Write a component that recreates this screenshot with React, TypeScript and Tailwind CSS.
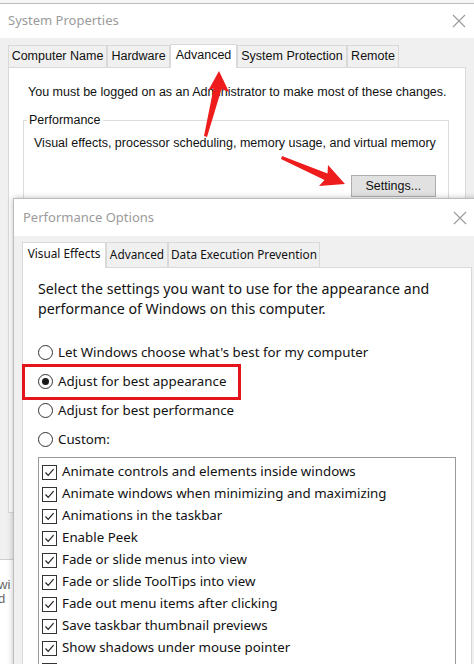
import React from 'react';

const sysTabs = [
  { label: 'Computer Name', w: 'w-[99px]' },
  { label: 'Hardware', w: 'w-[63px]' },
  { label: 'Advanced', w: 'w-[67px]', active: true },
  { label: 'System Protection', w: 'w-[110px]' },
  { label: 'Remote', w: 'w-[52px]' },
];

const perfTabs = [
  { label: 'Visual Effects', w: 'w-[84px]', active: true },
  { label: 'Advanced', w: 'w-[62px]' },
  { label: 'Data Execution Prevention', w: 'w-[152px]' },
];

const radios = [
  { label: "Let Windows choose what's best for my computer" },
  { label: 'Adjust for best appearance', checked: true },
  { label: 'Adjust for best performance' },
  { label: 'Custom:' },
];

const effects = [
  'Animate controls and elements inside windows',
  'Animate windows when minimizing and maximizing',
  'Animations in the taskbar',
  'Enable Peek',
  'Fade or slide menus into view',
  'Fade or slide ToolTips into view',
  'Fade out menu items after clicking',
  'Save taskbar thumbnail previews',
  'Show shadows under mouse pointer',
  'Show shadows under windows',
];

function CloseX() {
  return (
    <svg width="14" height="14" viewBox="0 0 14 14" className="text-[#9a9a9a]">
      <path d="M1 1 L13 13 M13 1 L1 13" stroke="currentColor" strokeWidth="1.1" fill="none" />
    </svg>
  );
}

function Tab({ label, w, active, tall }: { label: string; w: string; active?: boolean; tall: string }) {
  return (
    <div
      className={`${w} flex items-center justify-center whitespace-nowrap border border-[#d9d9d9] border-b-0 ${
        active ? `${tall} bg-white -mb-px z-10 pb-[3px]` : 'h-full bg-[#f0f0f0]'
      }`}
    >
      {label}
    </div>
  );
}

function Radio({ checked }: { checked?: boolean }) {
  return (
    <div className="w-[15px] h-[15px] rounded-full border border-[#333] bg-white flex items-center justify-center shrink-0">
      {checked && <div className="w-[7px] h-[7px] rounded-full bg-[#1a1a1a]" />}
    </div>
  );
}

function Checkbox() {
  return (
    <div className="w-[15px] h-[15px] border border-[#333] bg-white flex items-center justify-center shrink-0">
      <svg width="11" height="11" viewBox="0 0 11 11">
        <path d="M1.5 5.5 L4.2 8.3 L9.6 2.2" stroke="#222" strokeWidth="1.2" fill="none" />
      </svg>
    </div>
  );
}

function SystemProperties() {
  return (
    <div className="absolute left-0 top-[4px] w-[474px] h-[660px] flex flex-col font-['Liberation_Sans',Arial,sans-serif] text-[12.5px] text-[#111]">
      {/* Title bar */}
      <div className="h-[34px] bg-white flex items-center justify-between pl-[8px] pr-[8px] shrink-0">
        <span className="font-['Noto_Sans',sans-serif] text-[13px] text-[#9b9b9b]">System Properties</span>
        <CloseX />
      </div>
      {/* Body */}
      <div className="flex-1 bg-[#f0f0f0] pl-[8px] pt-[7px] flex flex-col">
        <div className="h-[22px] flex items-end">
          {sysTabs.map((t) => (
            <Tab key={t.label} label={t.label} w={t.w} active={t.active} tall="h-[24px]" />
          ))}
        </div>
        <div className="h-[446px] w-[458px] bg-white border border-[#d9d9d9] pl-[19px] pt-[16px] flex flex-col">
          <p className="leading-[16px] whitespace-nowrap">You must be logged on as an Administrator to make most of these changes.</p>
          <fieldset className="mt-[12px] ml-[-5px] w-[425px] border border-[#dcdcdc] pl-[10px] pr-[12px] pb-[10px]">
            <legend className="ml-[-7px] px-[2px] leading-[16px]">Performance</legend>
            <p className="mt-[7px] leading-[16px] whitespace-nowrap">Visual effects, processor scheduling, memory usage, and virtual memory</p>
            <div className="flex justify-end mt-[24px]">
              <button className="w-[85px] h-[22px] border border-[#adadad] bg-[#e1e1e1] text-[12.5px]">Settings...</button>
            </div>
          </fieldset>
        </div>
        <div className="mt-[46px] -ml-[8px] w-[20px] border-t border-[#cfcfcf] bg-white h-[120px] pt-[18px] text-[13px] leading-[14px] text-[#666] overflow-hidden">
          <div className="-ml-[2px]">wi</div>
          <div className="-ml-[2px]">d</div>
        </div>
      </div>
    </div>
  );
}

function PerformanceOptions() {
  return (
    <div className="absolute left-[13px] top-[198px] w-[472px] h-[470px] border border-[#bdbdbd] shadow-[0_0_6px_rgba(0,0,0,0.25)] flex flex-col font-['Noto_Sans',sans-serif] text-[#111]">
      <div className="h-[37px] bg-white flex items-center justify-between pl-[9px] pr-[17px] shrink-0">
        <span className="text-[13px] text-[#9b9b9b]">Performance Options</span>
        <CloseX />
      </div>
      <div className="flex-1 bg-[#f0f0f0] pl-[8px] pt-[6px] flex flex-col">
        <div className="h-[25px] flex items-end text-[11.8px]">
          {perfTabs.map((t) => (
            <Tab key={t.label} label={t.label} w={t.w} active={t.active} tall="h-[26px]" />
          ))}
        </div>
        <div className="flex-1 w-[450px] bg-white border border-[#d9d9d9] pl-[15px] pt-[11px] flex flex-col text-[13.3px]">
          <p className="leading-[20px] text-[14.2px] whitespace-nowrap">
            Select the settings you want to use for the appearance and
            <br />
            performance of Windows on this computer.
          </p>
          <div className="mt-[19px] flex flex-col">
            {radios.map((r) => (
              <div key={r.label} className="h-[29px] flex items-center gap-[5px]">
                <Radio checked={r.checked} />
                <span>{r.label}</span>
              </div>
            ))}
          </div>
          <div className="mt-[3px] w-[418px] flex-1 border border-[#9a9a9a] pt-[3px] pl-[3px] flex flex-col overflow-hidden">
            {effects.map((e) => (
              <div key={e} className="h-[22px] flex items-center gap-[5px] shrink-0">
                <Checkbox />
                <span>{e}</span>
              </div>
            ))}
          </div>
        </div>
      </div>
    </div>
  );
}

function Annotations() {
  return (
    <svg className="absolute inset-0 pointer-events-none" width="474" height="664" viewBox="0 0 474 664">
      <path
        d="M219 71 L229 92 L221.5 89 L207 137 L204 136 L213.5 88.5 L208.5 90 Z"
        fill="#ee1c1c"
      />
      <path
        d="M345 184 L319 186 L324.5 180 L281 159 L282 156 L327.5 173.5 L328 165 Z"
        fill="#ee1c1c"
      />
      <rect x="23.5" y="365.5" width="216" height="33" fill="none" stroke="#e3141c" strokeWidth="3" />
    </svg>
  );
}

export default function App() {
  return (
    <div className="relative w-[474px] h-[664px] overflow-hidden bg-white">
      <div className="h-[4px] bg-[#f6f6f6] border-b border-[#bdbdbd]" />
      <SystemProperties />
      <PerformanceOptions />
      <Annotations />
    </div>
  );
}
